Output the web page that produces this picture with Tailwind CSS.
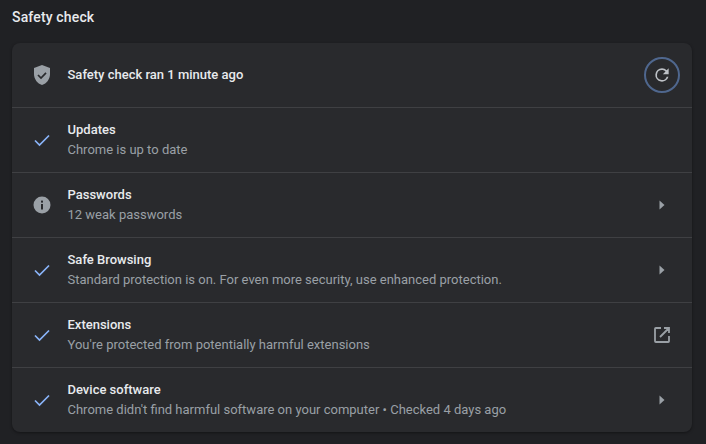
<!DOCTYPE html>
<html lang="en">
<head>
    <meta charset="UTF-8">
    <title>Safety check</title>
    <script src="https://cdn.jsdelivr.net/npm/@tailwindcss/browser@4"></script>
</head>
<body class="bg-[#202124] font-['Roboto',sans-serif] h-[444px] w-[706px] overflow-hidden">
    <h2 class="h-[43px] pl-3 pt-[8px] text-[14px] tracking-[0.15px] leading-[18px] font-medium text-[#e8eaed]">Safety check</h2>
    <div class="mx-3 w-[680px] rounded-lg bg-[#292a2d] shadow-[0_1px_3px_rgba(0,0,0,0.4)]">
        <div class="flex h-[64px] items-center">
            <div class="flex w-[55.5px] justify-center pl-[5px]">
                <svg class="w-[24px] h-[24px]" viewBox="0 0 24 24"><path fill="#9aa0a6" d="M12 2 4 5v6.1c0 5 3.4 9.7 8 10.9 4.6-1.2 8-5.9 8-10.9V5z"/><path fill="none" stroke="#292a2d" stroke-width="1.7" d="m8 12 3 3 5-5.2"/></svg>
            </div>
            <span class="text-[13px] font-medium text-[#e8eaed]">Safety check ran 1 minute ago</span>
            <div class="ml-auto mr-[12px] flex h-[36px] w-[36px] items-center justify-center rounded-full border-2 border-[#4f678e]">
                <svg class="w-[20px] h-[20px]" viewBox="0 0 24 24"><path fill="#bdc1c6" d="M17.65 6.35A7.96 7.96 0 0 0 12 4a8 8 0 1 0 7.73 10h-2.08A6 6 0 1 1 12 6c1.66 0 3.14.69 4.22 1.78L13 11h7V4z"/></svg>
            </div>
        </div>
        <div class="flex h-[65px] items-center border-t border-[#3f4043]">
            <div class="flex w-[55.5px] justify-center pl-[5px]">
                <svg class="w-[20px] h-[20px]" viewBox="0 0 20 20"><path fill="none" stroke="#8ab4f8" stroke-width="1.75" d="m3 10.5 4.500 4.500 9.500-9.500"/></svg>
            </div>
            <div>
                <div class="text-[13px] leading-[20px] font-medium text-[#e8eaed]">Updates</div>
                <div class="text-[13px] leading-[20px] text-[#9aa0a6]">Chrome is up to date</div>
            </div>
        </div>
        <div class="flex h-[65px] items-center border-t border-[#3f4043]">
            <div class="flex w-[55.5px] justify-center pl-[5px]">
                <svg class="w-[20px] h-[20px]" viewBox="0 0 20 20"><circle cx="10" cy="10" r="8.5" fill="#9aa0a6"/><rect x="9" y="9" width="2" height="5.5" fill="#292a2d"/><rect x="9" y="5.6" width="2" height="2" fill="#292a2d"/></svg>
            </div>
            <div>
                <div class="text-[13px] leading-[20px] font-medium text-[#e8eaed]">Passwords</div>
                <div class="text-[13px] leading-[20px] text-[#9aa0a6]">12 weak passwords</div>
            </div>
            <svg class="ml-auto mr-[27px] w-[6px] h-[10px]" viewBox="0 0 6 10"><path fill="#9aa0a6" d="M0.5 0.5 5.5 5 0.5 9.5z"/></svg>
        </div>
        <div class="flex h-[65px] items-center border-t border-[#3f4043]">
            <div class="flex w-[55.5px] justify-center pl-[5px]">
                <svg class="w-[20px] h-[20px]" viewBox="0 0 20 20"><path fill="none" stroke="#8ab4f8" stroke-width="1.75" d="m3 10.5 4.500 4.500 9.500-9.500"/></svg>
            </div>
            <div>
                <div class="text-[13px] leading-[20px] font-medium text-[#e8eaed]">Safe Browsing</div>
                <div class="text-[13px] leading-[20px] text-[#9aa0a6]">Standard protection is on. For even more security, use enhanced protection.</div>
            </div>
            <svg class="ml-auto mr-[27px] w-[6px] h-[10px]" viewBox="0 0 6 10"><path fill="#9aa0a6" d="M0.5 0.5 5.5 5 0.5 9.5z"/></svg>
        </div>
        <div class="flex h-[65px] items-center border-t border-[#3f4043]">
            <div class="flex w-[55.5px] justify-center pl-[5px]">
                <svg class="w-[20px] h-[20px]" viewBox="0 0 20 20"><path fill="none" stroke="#8ab4f8" stroke-width="1.75" d="m3 10.5 4.500 4.500 9.500-9.500"/></svg>
            </div>
            <div>
                <div class="text-[13px] leading-[20px] font-medium text-[#e8eaed]">Extensions</div>
                <div class="text-[13px] leading-[20px] text-[#9aa0a6]">You're protected from potentially harmful extensions</div>
            </div>
            <svg class="ml-auto mr-[21px] w-[18px] h-[18px]" viewBox="0 0 18 18"><path fill="none" stroke="#9aa0a6" stroke-width="1.8" d="M8 2H2.800A.8.8 0 0 0 2 2.800V15.200a.8.8 0 0 0 .8.8H15.200a.8.8 0 0 0 .8-.8V10M11 2h5v5M16 2 7 11"/></svg>
        </div>
        <div class="flex h-[65px] items-center border-t border-[#3f4043]">
            <div class="flex w-[55.5px] justify-center pl-[5px]">
                <svg class="w-[20px] h-[20px]" viewBox="0 0 20 20"><path fill="none" stroke="#8ab4f8" stroke-width="1.75" d="m3 10.5 4.500 4.500 9.500-9.500"/></svg>
            </div>
            <div>
                <div class="text-[13px] leading-[20px] font-medium text-[#e8eaed]">Device software</div>
                <div class="text-[13px] leading-[20px] text-[#9aa0a6]">Chrome didn't find harmful software on your computer • Checked 4 days ago</div>
            </div>
            <svg class="ml-auto mr-[27px] w-[6px] h-[10px]" viewBox="0 0 6 10"><path fill="#9aa0a6" d="M0.5 0.5 5.5 5 0.5 9.5z"/></svg>
        </div>
    </div>
</body>
</html>
